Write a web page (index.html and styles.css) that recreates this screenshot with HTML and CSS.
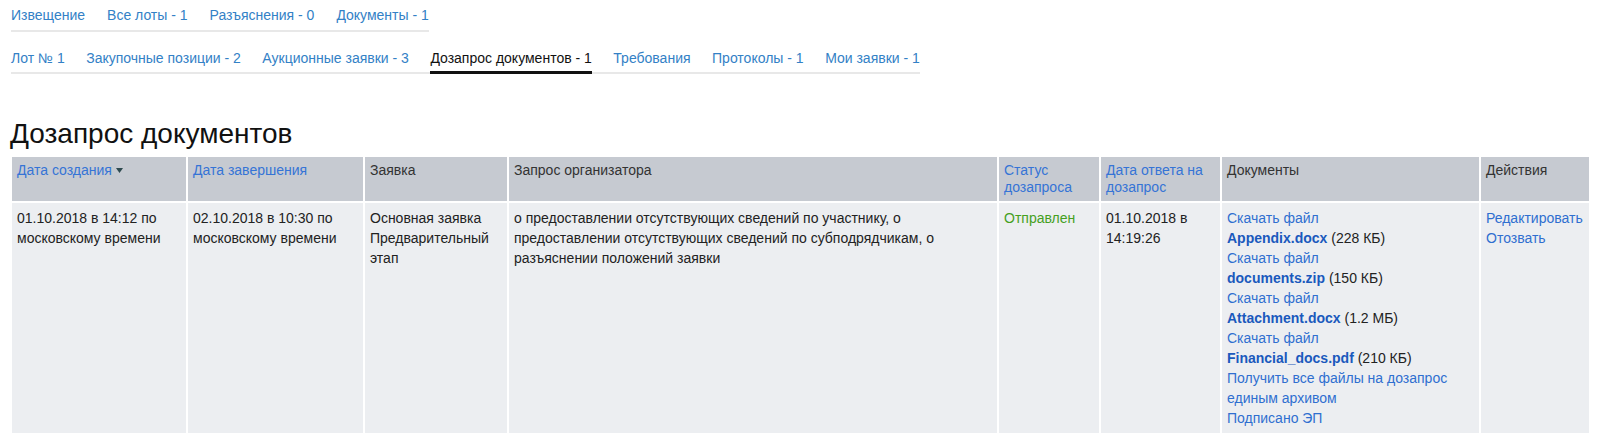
FILE: index.html
```html
<!DOCTYPE html>
<html lang="ru">
<head>
<meta charset="utf-8">
<title>Дозапрос документов</title>
<link rel="stylesheet" href="styles.css">
</head>
<body>
<div class="page">
  <nav class="tabs tabs-top">
    <a class="tab" href="#">Извещение</a>
    <a class="tab" href="#">Все лоты - 1</a>
    <a class="tab" href="#">Разъяснения - 0</a>
    <a class="tab" href="#">Документы - 1</a>
  </nav>
  <nav class="tabs tabs-sub">
    <a class="tab" href="#">Лот № 1</a>
    <a class="tab" href="#">Закупочные позиции - 2</a>
    <a class="tab" href="#">Аукционные заявки - 3</a>
    <span class="tab active">Дозапрос документов - 1</span>
    <a class="tab" href="#">Требования</a>
    <a class="tab" href="#">Протоколы - 1</a>
    <a class="tab" href="#">Мои заявки - 1</a>
  </nav>

  <h1 class="title">Дозапрос документов</h1>

  <table class="grid">
    <thead>
      <tr>
        <th class="c1"><a href="#">Дата создания</a> <svg class="sort" width="7" height="5" viewBox="0 0 7 5"><path d="M0 0H7L3.5 5Z"/></svg></th>
        <th class="c2"><a href="#">Дата завершения</a></th>
        <th class="c3">Заявка</th>
        <th class="c4">Запрос организатора</th>
        <th class="c5"><a href="#">Статус дозапроса</a></th>
        <th class="c6"><a href="#">Дата ответа на дозапрос</a></th>
        <th class="c7">Документы</th>
        <th class="c8">Действия</th>
      </tr>
    </thead>
    <tbody>
      <tr>
        <td>01.10.2018 в 14:12 по московскому времени</td>
        <td>02.10.2018 в 10:30 по московскому времени</td>
        <td>Основная заявка<br>Предварительный этап</td>
        <td>о предоставлении отсутствующих сведений по участнику, о предоставлении отсутствующих сведений по субподрядчикам, о разъяснении положений заявки</td>
        <td class="status">Отправлен</td>
        <td>01.10.2018 в 14:19:26</td>
        <td>
          <div class="file"><a href="#">Скачать файл<br><b>Appendix.docx</b></a> (228 КБ)</div>
          <div class="file"><a href="#">Скачать файл<br><b>documents.zip</b></a> (150 КБ)</div>
          <div class="file"><a href="#">Скачать файл<br><b>Attachment.docx</b></a> (1.2 МБ)</div>
          <div class="file"><a href="#">Скачать файл<br><b>Financial_docs.pdf</b></a> (210 КБ)</div>
          <div class="file"><a href="#">Получить все файлы на дозапрос единым архивом</a></div>
          <div class="file"><a href="#">Подписано ЭП</a></div>
        </td>
        <td class="actions">
          <a href="#">Редактировать</a>
          <a href="#">Отозвать</a>
        </td>
      </tr>
    </tbody>
  </table>
</div>
</body>
</html>
```

FILE: styles.css
```css
html, body {
  margin: 0;
  padding: 0;
  background: #fff;
}

body {
  font-family: "Liberation Sans", Arial, sans-serif;
  font-size: 14px;
  line-height: 20px;
  color: #222;
}

.page {
  padding: 5px 0 0 11px;
}

a {
  color: #2f6fd0;
  text-decoration: none;
}

.tabs {
  display: flex;
  width: max-content;
  gap: 22px;
  border-bottom: 2px solid #e8e8e8;
}

.tabs .tab {
  color: #3381c6;
  white-space: nowrap;
}

.tabs-top {
  padding-bottom: 5px;
}

.tabs-sub {
  margin-top: 16px;
  gap: 21.5px;
}

.tabs-sub .tab {
  padding-bottom: 3px;
  border-bottom: 3px solid transparent;
  margin-bottom: -2px;
}

.tabs-sub .tab.active {
  color: #111;
  border-bottom-color: #111;
}

.title {
  margin: 44px 0 7px -1px;
  font-size: 28px;
  line-height: 32px;
  font-weight: normal;
  color: #111;
}

.grid {
  margin-left: 1px;
  width: 1577px;
  table-layout: fixed;
  border-collapse: separate;
  border-spacing: 0;
}

.grid th,
.grid td {
  box-sizing: border-box;
  text-align: left;
  vertical-align: top;
  padding: 5px 5px;
  border-left: 2px solid #fff;
}

.grid th:first-child,
.grid td:first-child {
  border-left: 0;
}

.grid th {
  background: #c6cad1;
  font-weight: normal;
  color: #333;
  line-height: 17px;
  height: 46px;
  border-bottom: 2px solid #fff;
}

.grid th a {
  color: #3574d6;
}

.grid td {
  background: #eceef1;
  color: #222;
}

.grid td.status {
  color: #45a01f;
}

.sort {
  fill: #2e4a4f;
  vertical-align: 2px;
}

.c1 { width: 174px; }
.c2 { width: 177px; }
.c3 { width: 144px; }
.c4 { width: 490px; }
.c5 { width: 102px; }
.c6 { width: 121px; }
.c7 { width: 259px; }
.c8 { width: 110px; }

.file a {
  color: #2f6fd0;
}

.file b {
  color: #1a59bd;
}

.actions a {
  display: block;
  white-space: nowrap;
}
```
